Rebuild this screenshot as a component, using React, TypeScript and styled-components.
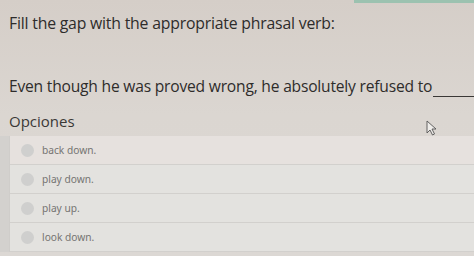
import styled, { createGlobalStyle } from 'styled-components';

const Global = createGlobalStyle`
  html, body {
    margin: 0;
    padding: 0;
    width: 474px;
    height: 256px;
    overflow: hidden;
  }
`;

const options = ['back down.', 'play down.', 'play up.', 'look down.'];

const App = () => {
  return (
    <Screen>
      <Global />
      <TopStrip />
      <Question>
        <Title>Fill the gap with the appropriate phrasal verb:</Title>
        <Sentence>
          Even though he was proved wrong, he absolutely refused to
          <Gap />
        </Sentence>
      </Question>
      <OptionsHead>
        <span>Opciones</span>
        <Cursor viewBox="0 0 12 16">
          <path
            d="M1 1 L1 13 L4 10 L6.5 15 L8.5 14 L6 9 L10 9 Z"
            fill="#eeece9"
            stroke="#555"
            strokeWidth="0.9"
            strokeLinejoin="round"
          />
        </Cursor>
      </OptionsHead>
      <Options>
        {options.map((option, index) => (
          <Option key={option} first={index === 0}>
            <Radio />
            <OptionText>{option}</OptionText>
          </Option>
        ))}
      </Options>
    </Screen>
  );
};

const Screen = styled.div`
  position: relative;
  width: 474px;
  height: 256px;
  overflow: hidden;
  background: linear-gradient(180deg, #d5cec8 0%, #dbd6d1 45%, #dcd8d4 100%);
  font-family: 'Open Sans', 'Noto Sans', sans-serif;
  color: #2e2c2b;
`;

const TopStrip = styled.div`
  position: absolute;
  top: 0;
  right: 0;
  width: 120px;
  height: 3px;
  background: #9cc2b0;
`;

const Question = styled.div`
  padding: 12px 0 0 9px;
`;

const Title = styled.div`
  font-size: 15.8px;
  line-height: 22px;
  letter-spacing: -0.2px;
`;

const Sentence = styled.div`
  margin-top: 41px;
  font-size: 15.6px;
  line-height: 22px;
  letter-spacing: -0.2px;
  white-space: nowrap;
  display: flex;
  align-items: flex-end;
`;

const Gap = styled.span`
  display: inline-block;
  width: 60px;
  height: 4px;
  border-bottom: 1px solid #3a3836;
  margin-left: 1px;
`;

const OptionsHead = styled.div`
  position: relative;
  padding: 14px 0 0 9px;
  font-size: 15px;
  line-height: 20px;
  color: #3a3836;
  height: 25px;
`;

const Cursor = styled.svg`
  position: absolute;
  left: 426px;
  top: 23px;
  width: 12px;
  height: 16px;
`;

const Options = styled.div`
  margin-left: 9px;
  display: flex;
  flex-direction: column;
  border-left: 1px solid #cfcdca;
  background: #e3e2df;
  box-shadow: -9px 0 0 #d3d1ce;
`;

const Option = styled.div<{ first?: boolean }>`
  height: 28px;
  display: flex;
  align-items: center;
  padding-left: 11px;
  gap: 8px;
  background: ${({ first }) => (first ? '#e6e1de' : 'transparent')};
  border-bottom: 1px solid #d2d0cd;
`;

const Radio = styled.div`
  width: 13px;
  height: 13px;
  border-radius: 50%;
  background: #cfcfce;
`;

const OptionText = styled.span`
  font-family: 'Noto Sans', 'Open Sans', sans-serif;
  font-size: 10.2px;
  color: #757472;
`;

export default App;
